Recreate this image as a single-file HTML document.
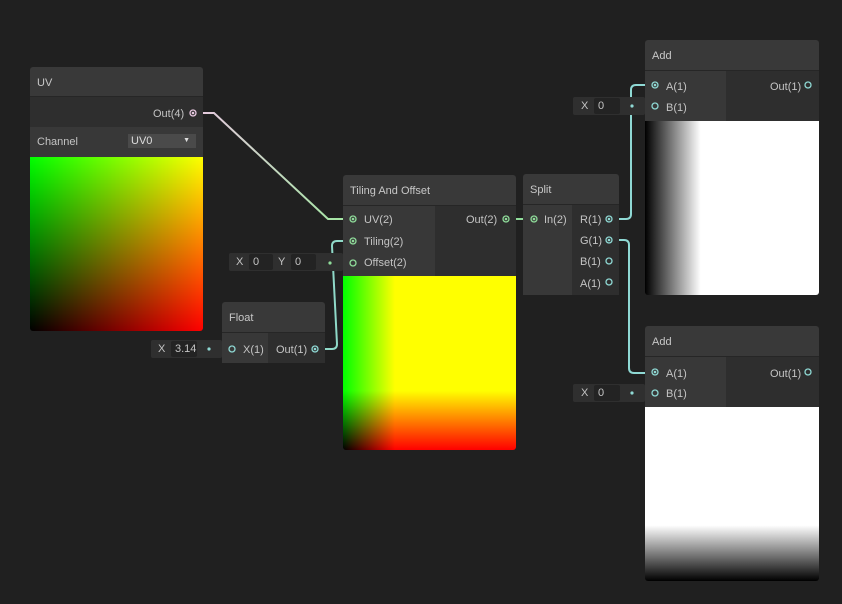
<!DOCTYPE html>
<html><head><meta charset="utf-8"><style>
*{margin:0;padding:0;box-sizing:border-box}
body{width:842px;height:604px;background:#202020;position:relative;overflow:hidden;font-family:"Liberation Sans",sans-serif;font-size:11px;color:#c4c4c4}
.a{position:absolute}
.hd{background:#393939;color:#c8c8c8;font-size:11px;padding-left:7px;padding-top:2px;display:flex;align-items:center;border-bottom:1px solid #262626;border-radius:3px 3px 0 0}
.in{background:#383838}
.out{background:#2e2e2e}
.t{position:absolute;white-space:nowrap}
.fld{background:#2f2f2f;position:absolute;border-radius:2px}
.box{background:#232323;position:absolute;color:#c4c4c4;padding-left:4px;line-height:17px;border-radius:2px}
</style></head><body>
<svg class="a" style="left:0;top:0" width="842" height="604">
<defs><linearGradient id="g1" x1="0" x2="1"><stop offset="0" stop-color="#e8c8e0"/><stop offset="1" stop-color="#a0e8a0"/></linearGradient></defs>
<path d="M197 113 H214 L328 219 H350" stroke="url(#g1)" stroke-width="2" fill="none"/>
<path d="M316 349 H332 Q337 349 337 344 L332 246 Q332 241 337 241 H350" stroke="#8fd9c8" stroke-width="2" fill="none"/>
<path d="M330 263 H350" stroke="#8fdc9a" stroke-width="2" fill="none"/>
<path d="M207 349 H230" stroke="#8fd9d4" stroke-width="2" fill="none"/>
<path d="M507 219 H532" stroke="#8fdc9a" stroke-width="2" fill="none"/>
<path d="M610 219 H626 Q631 219 631 214 V90 Q631 85 636 85 H653" stroke="#8fd9d4" stroke-width="2" fill="none"/>
<path d="M610 240 H624 Q629 240 629 245 V368 Q629 373 634 373 H653" stroke="#8fd9d4" stroke-width="2" fill="none"/>
<path d="M632 106 H653 M632 393 H653" stroke="#8fd9d4" stroke-width="2" fill="none"/>
</svg>

<!-- UV node -->
<div class="a hd" style="left:30px;top:67px;width:173px;height:30px">UV</div>
<div class="a out" style="left:30px;top:97px;width:173px;height:30px"></div>
<span class="t" style="left:153px;top:108px">Out(4)</span>
<div class="a in" style="left:30px;top:127px;width:173px;height:30px"></div>
<span class="t" style="left:37px;top:136px">Channel</span>
<div class="a" style="left:128px;top:134px;width:68px;height:14px;background:#4a4a4a;color:#ddd;padding-left:3px;line-height:14px">UV0<span style="position:absolute;right:6px;top:0;font-size:7px">▼</span></div>
<div class="a" style="left:30px;top:157px;width:173px;height:174px;background:linear-gradient(to right,#000,#f00),linear-gradient(to bottom,#0f0,#000);background-blend-mode:screen;border-radius:0 0 3px 3px"></div>

<!-- Tiling -->
<div class="a hd" style="left:343px;top:175px;width:173px;height:31px">Tiling And Offset</div>
<div class="a in" style="left:343px;top:206px;width:92px;height:70px"></div>
<div class="a out" style="left:435px;top:206px;width:81px;height:70px"></div>
<span class="t" style="left:364px;top:214px">UV(2)</span>
<span class="t" style="left:364px;top:236px">Tiling(2)</span>
<span class="t" style="left:364px;top:257px">Offset(2)</span>
<span class="t" style="left:466px;top:214px">Out(2)</span>
<div class="a" style="left:343px;top:276px;width:173px;height:174px;background:linear-gradient(to right,#000 0%,#f00 30%,#f00),linear-gradient(to bottom,#0f0 0%,#0f0 66%,#000 100%);background-blend-mode:screen;border-radius:0 0 3px 3px"></div>

<!-- Split -->
<div class="a hd" style="left:523px;top:174px;width:96px;height:31px">Split</div>
<div class="a in" style="left:523px;top:205px;width:49px;height:90px"></div>
<div class="a out" style="left:572px;top:205px;width:47px;height:90px"></div>
<span class="t" style="left:544px;top:214px">In(2)</span>
<span class="t" style="left:580px;top:214px">R(1)</span>
<span class="t" style="left:580px;top:235px">G(1)</span>
<span class="t" style="left:580px;top:256px">B(1)</span>
<span class="t" style="left:580px;top:278px">A(1)</span>

<!-- Float -->
<div class="a hd" style="left:222px;top:302px;width:103px;height:31px">Float</div>
<div class="a in" style="left:222px;top:333px;width:46px;height:30px"></div>
<div class="a out" style="left:268px;top:333px;width:57px;height:30px"></div>
<span class="t" style="left:243px;top:344px">X(1)</span>
<span class="t" style="left:276px;top:344px">Out(1)</span>

<!-- Add 1 -->
<div class="a hd" style="left:645px;top:40px;width:174px;height:31px">Add</div>
<div class="a in" style="left:645px;top:71px;width:81px;height:50px"></div>
<div class="a out" style="left:726px;top:71px;width:93px;height:50px"></div>
<span class="t" style="left:666px;top:81px">A(1)</span>
<span class="t" style="left:666px;top:102px">B(1)</span>
<span class="t" style="left:770px;top:81px">Out(1)</span>
<div class="a" style="left:645px;top:121px;width:174px;height:174px;background:linear-gradient(to right,#000 0%,#fff 32%,#fff);border-radius:0 0 3px 3px"></div>

<!-- Add 2 -->
<div class="a hd" style="left:645px;top:326px;width:174px;height:31px">Add</div>
<div class="a in" style="left:645px;top:357px;width:81px;height:50px"></div>
<div class="a out" style="left:726px;top:357px;width:93px;height:50px"></div>
<span class="t" style="left:666px;top:368px">A(1)</span>
<span class="t" style="left:666px;top:388px">B(1)</span>
<span class="t" style="left:770px;top:368px">Out(1)</span>
<div class="a" style="left:645px;top:407px;width:174px;height:174px;background:linear-gradient(to bottom,#fff 0%,#fff 68%,#000 100%);border-radius:0 0 3px 3px"></div>

<!-- inline fields -->
<div class="fld" style="left:229px;top:253px;width:114px;height:18px"></div>
<span class="t" style="left:236px;top:256px">X</span>
<div class="box" style="left:249px;top:254px;width:24px;height:16px">0</div>
<span class="t" style="left:278px;top:256px">Y</span>
<div class="box" style="left:291px;top:254px;width:25px;height:16px">0</div>

<div class="fld" style="left:151px;top:340px;width:71px;height:18px"></div>
<span class="t" style="left:158px;top:343px">X</span>
<div class="box" style="left:171px;top:341px;width:26px;height:16px">3.14</div>

<div class="fld" style="left:573px;top:97px;width:72px;height:18px"></div>
<span class="t" style="left:581px;top:100px">X</span>
<div class="box" style="left:594px;top:98px;width:26px;height:16px">0</div>

<div class="fld" style="left:573px;top:384px;width:72px;height:18px"></div>
<span class="t" style="left:581px;top:387px">X</span>
<div class="box" style="left:594px;top:385px;width:26px;height:16px">0</div>

<!-- ports -->
<svg class="a" style="left:0;top:0" width="842" height="604">
<g fill="none" stroke-width="1.3">
<circle cx="193" cy="113" r="3" stroke="#e8c8e0"/><circle cx="193" cy="113" r="1.3" fill="#e8c8e0"/>
<g stroke="#8fdc9a"><circle cx="353" cy="219" r="3"/><circle cx="353" cy="241" r="3"/><circle cx="353" cy="263" r="3"/><circle cx="506" cy="219" r="3"/><circle cx="534" cy="219" r="3"/></g>
<g fill="#8fdc9a"><circle cx="353" cy="219" r="1.3"/><circle cx="353" cy="241" r="1.3"/><circle cx="506" cy="219" r="1.3"/><circle cx="534" cy="219" r="1.3"/><circle cx="330" cy="263" r="1.6"/></g>
<g stroke="#8fd9d4"><circle cx="609" cy="219" r="3"/><circle cx="609" cy="240" r="3"/><circle cx="609" cy="261" r="3"/><circle cx="609" cy="282" r="3"/><circle cx="232" cy="349" r="3"/><circle cx="315" cy="349" r="3"/><circle cx="655" cy="85" r="3"/><circle cx="655" cy="106" r="3"/><circle cx="808" cy="85" r="3"/><circle cx="655" cy="372" r="3"/><circle cx="655" cy="393" r="3"/><circle cx="808" cy="372" r="3"/></g>
<g fill="#8fd9d4"><circle cx="609" cy="219" r="1.3"/><circle cx="609" cy="240" r="1.3"/><circle cx="315" cy="349" r="1.3"/><circle cx="655" cy="85" r="1.3"/><circle cx="655" cy="372" r="1.3"/><circle cx="209" cy="349" r="1.6"/><circle cx="632" cy="106" r="1.6"/><circle cx="632" cy="393" r="1.6"/></g>
</g></svg>
</body></html>
